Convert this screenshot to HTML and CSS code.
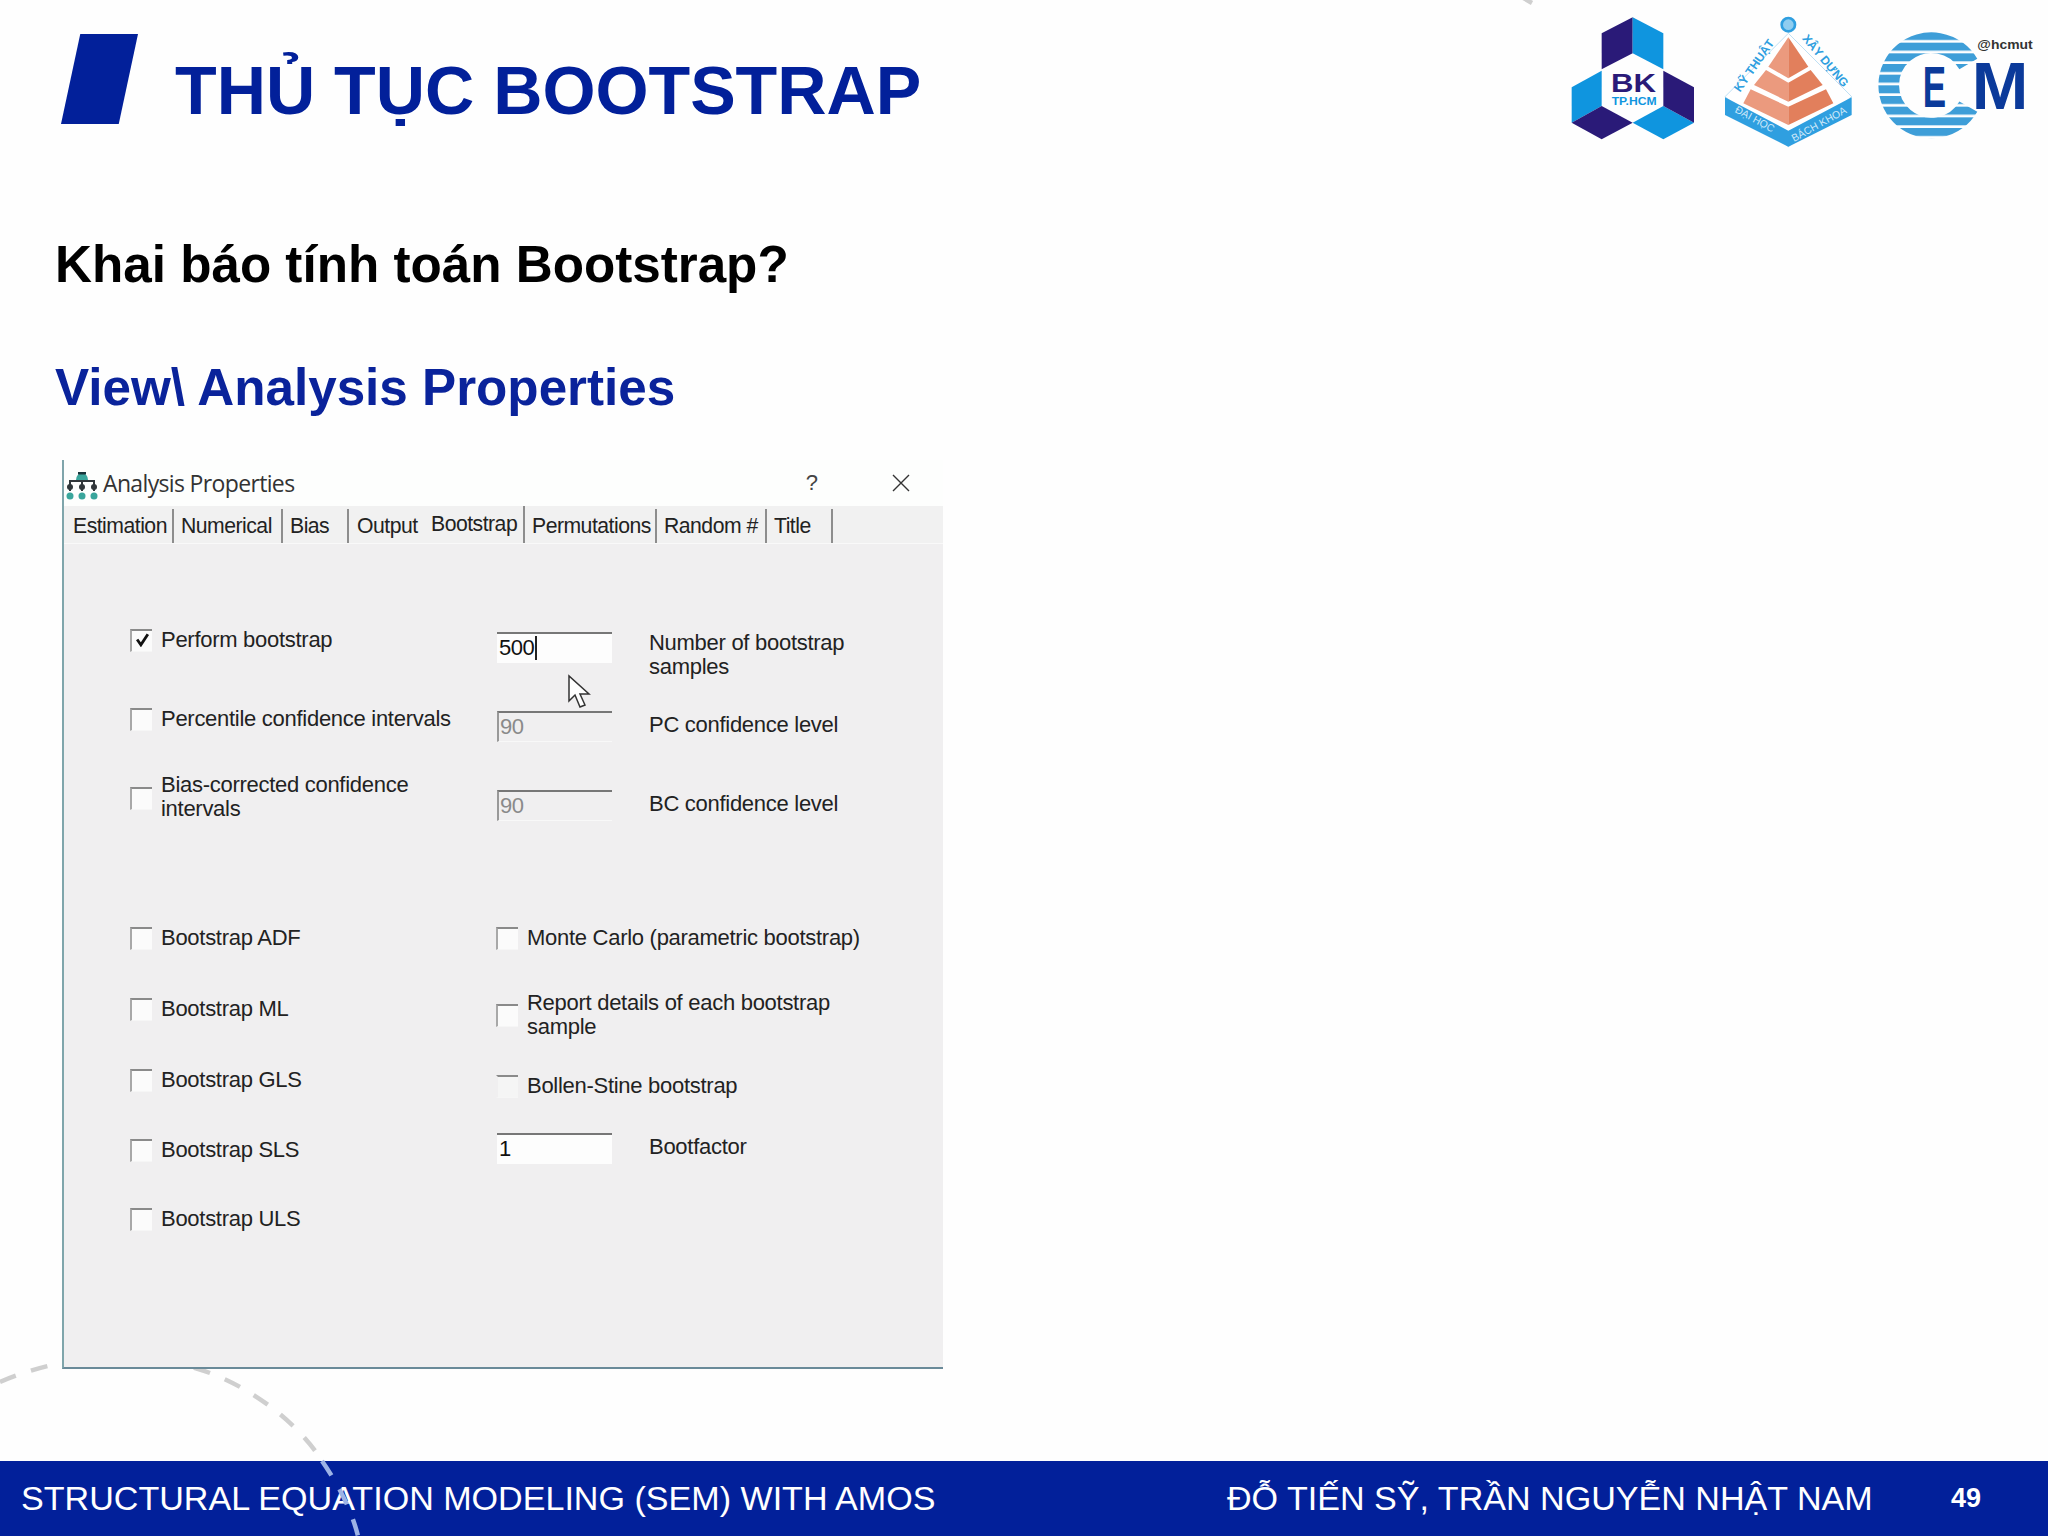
FILE: index.html
```html
<!DOCTYPE html>
<html lang="en">
<head>
  <meta charset="UTF-8" />
  <title>Thủ tục Bootstrap</title>
  <link rel="stylesheet" href="styles.css">
</head>
<body>
  <div class="slide">
    <svg class="arcs" width="2048" height="1536" viewBox="0 0 2048 1536">
      <path class="arc" d="M0 1382 C60 1356 130 1350 195 1368 C250 1384 300 1425 322 1461" />
      <path class="arc arc-on-bar" d="M322 1461 C340 1487 352 1512 358 1536" />
      <path class="arc" d="M1520 -4 L1532 3" />
    </svg>

    <div class="top">
      <div class="title">
        <div class="title-mark"></div>
        <h1>THỦ TỤC BOOTSTRAP</h1>
      </div>
      <svg class="logos" width="508" height="160" viewBox="0 0 1524 480">
        <!-- BK -->
        <polygon fill="#2a1a78" points="185,100 278,52 278,160 185,208" />
        <polygon fill="#0f95df" points="278,52 370,100 370,208 278,160" />
        <polygon fill="#0f95df" points="185,212 95,262 95,368 185,318" />
        <polygon fill="#2a1a78" points="95,368 185,318 278,368 185,418" />
        <polygon fill="#0f95df" points="278,368 370,318 462,368 370,418" />
        <polygon fill="#2a1a78" points="370,212 462,262 462,368 370,318" />
        <text class="bk" x="213" y="277" textLength="135" lengthAdjust="spacingAndGlyphs">BK</text>
        <text class="bk-sub" x="215" y="315" textLength="135" lengthAdjust="spacingAndGlyphs">TP.HCM</text>
        <!-- ky thuat xay dung -->
        <circle cx="745" cy="74" r="20" fill="#8fcdf0" stroke="#2f9fe0" stroke-width="8" />
        <polygon fill="#fff" stroke="#bfe0f4" stroke-width="3" points="745,100 935,290 745,440 555,290" />
        <polygon fill="#2f9fe0" points="555,292 745,392 935,292 935,345 745,440 555,345" />
        <polygon fill="#eb9a7e" points="745,112 745,235 685,200" />
        <polygon fill="#e27f5c" points="745,112 745,235 805,200" />
        <polygon fill="#eb9a7e" points="745,248 745,305 642,255 678,210" />
        <polygon fill="#e27f5c" points="745,248 745,305 848,255 812,210" />
        <polygon fill="#eb9a7e" points="745,320 745,375 610,310 632,268" />
        <polygon fill="#e27f5c" points="745,320 745,375 880,310 858,268" />
        <text class="ktxd" transform="translate(600,278) rotate(-55)">KỸ THUẬT</text>
        <text class="ktxd" transform="translate(785,116) rotate(50)">XÂY DỰNG</text>
        <text class="dhbk" transform="translate(583,335) rotate(29)">ĐẠI HỌC</text>
        <text class="dhbk" transform="translate(762,426) rotate(-29)">BÁCH KHOA</text>
        <!-- CEM -->
        <defs>
          <pattern id="stripes" width="10" height="32" patternUnits="userSpaceOnUse">
            <rect width="10" height="32" fill="#fff" />
            <rect width="10" height="24" fill="#3e9ed8" />
          </pattern>
        </defs>
        <path fill="none" stroke="url(#stripes)" stroke-width="62" d="M1285 192 A128 128 0 1 0 1285 320" />
        <text class="cem-e" x="1148" y="320" textLength="70" lengthAdjust="spacingAndGlyphs">E</text>
        <text class="cem-m" x="1295" y="328" textLength="170" lengthAdjust="spacingAndGlyphs">M</text>
        <text class="cem-tag" x="1312" y="148" textLength="166" lengthAdjust="spacingAndGlyphs">@hcmut</text>
      </svg>
    </div>

    <h2 class="question">Khai báo tính toán Bootstrap?</h2>
    <h2 class="path">View\ Analysis Properties</h2>

    <div class="dialog">
      <div class="dialog-title">
        <svg class="app-icon" width="34" height="36" viewBox="0 0 34 36">
          <path d="M17 12 V26 M17 16 H5 V26 M17 16 H29 V26" fill="none" stroke="#30363a" stroke-width="2" />
          <path d="M11 15 A6 7 0 1 1 23 15 Z" fill="#3aa69c" />
          <rect x="13" y="7" width="8" height="2.5" fill="#17343a" />
          <circle cx="5" cy="22" r="3" fill="#30363a" /><circle cx="17" cy="22" r="3" fill="#30363a" /><circle cx="29" cy="22" r="3" fill="#30363a" />
          <circle cx="5" cy="31" r="3.5" fill="#3aa69c" /><circle cx="17" cy="31" r="3.5" fill="#3aa69c" /><circle cx="29" cy="31" r="3.5" fill="#3aa69c" />
        </svg>
        <span class="dialog-name">Analysis Properties</span>
        <span class="help">?</span>
        <svg class="close" width="18" height="18" viewBox="0 0 18 18">
          <path d="M1 1 L17 17 M17 1 L1 17" stroke="#333" stroke-width="1.4" fill="none" />
        </svg>
      </div>

      <div class="tabs">
        <div class="tab tab-estimation">Estimation</div>
        <div class="tab tab-numerical">Numerical</div>
        <div class="tab tab-bias">Bias</div>
        <div class="tab tab-output">Output</div>
        <div class="tab tab-active">Bootstrap</div>
        <div class="tab tab-permutations">Permutations</div>
        <div class="tab tab-random">Random #</div>
        <div class="tab tab-title">Title</div>
      </div>

      <div class="panel">
        <div class="col col-left">
          <div class="row"><span class="check"><svg class="tick" width="15" height="15" viewBox="0 0 14 14"><path d="M2 7 L5.5 12 L12 2" fill="none" stroke="#111" stroke-width="2.6" /></svg></span><span class="label">Perform bootstrap</span></div>
          <div class="row"><span class="check"></span><span class="label">Percentile confidence intervals</span></div>
          <div class="row"><span class="check"></span><span class="label label-high">Bias-corrected confidence<br>intervals</span></div>
          <div class="row"><span class="check"></span><span class="label">Bootstrap ADF</span></div>
          <div class="row"><span class="check"></span><span class="label">Bootstrap ML</span></div>
          <div class="row"><span class="check"></span><span class="label">Bootstrap GLS</span></div>
          <div class="row"><span class="check"></span><span class="label">Bootstrap SLS</span></div>
          <div class="row"><span class="check"></span><span class="label">Bootstrap ULS</span></div>
        </div>

        <div class="col col-right">
          <div class="row row-field"><span class="field"><span>500</span><i class="caret"></i></span><span class="label label-low">Number of bootstrap<br>samples</span></div>
          <div class="row row-field"><span class="field field-off">90</span><span class="label">PC confidence level</span></div>
          <div class="row row-field"><span class="field field-off">90</span><span class="label">BC confidence level</span></div>
          <div class="row"><span class="check"></span><span class="label">Monte Carlo (parametric bootstrap)</span></div>
          <div class="row"><span class="check"></span><span class="label">Report details of each bootstrap<br>sample</span></div>
          <div class="row"><span class="check check-faint"></span><span class="label">Bollen-Stine bootstrap</span></div>
          <div class="row row-field"><span class="field">1</span><span class="label">Bootfactor</span></div>
        </div>

        <svg class="cursor" width="26" height="36" viewBox="0 0 26 36">
          <path d="M2 2 V27 L8 21 L13 33 L18 31 L13 20 L22 20 Z" fill="#fff" stroke="#333" stroke-width="1.5" />
        </svg>
      </div>
    </div>

    <div class="footer">
      <span class="footer-left">STRUCTURAL EQUATION MODELING (SEM) WITH AMOS</span>
      <span class="footer-right">ĐỖ TIẾN SỸ, TRẦN NGUYỄN NHẬT NAM</span>
      <span class="footer-page">49</span>
    </div>
  </div>
</body>
</html>
```

FILE: styles.css
```css
body {
  margin: 0;
  background: #fff;
  font-family: "Liberation Sans", Arial, sans-serif;
}

.slide {
  position: relative;
  width: 2048px;
  height: 1536px;
  display: flex;
  flex-direction: column;
  overflow: hidden;
  background: #fefefe;
}

.arcs {
  position: absolute;
  left: 0;
  top: 0;
  z-index: 2;
}

.arc {
  fill: none;
  stroke: #cfcfcf;
  stroke-width: 4.5;
  stroke-dasharray: 17 16;
}

.arc-on-bar {
  stroke: #9db3e6;
}

.top {
  display: flex;
  justify-content: space-between;
  height: 160px;
}

.title {
  display: flex;
  align-items: flex-start;
  padding: 34px 0 0 61px;
}

.title-mark {
  width: 77px;
  height: 90px;
  background: #02209a;
  clip-path: polygon(25% 0, 100% 0, 75% 100%, 0 100%);
}

.title h1 {
  margin: 20px 0 0 37px;
  font-size: 68.2px;
  line-height: 72px;
  font-weight: bold;
  color: #02209a;
}

.logos .bk {
  font: bold 78px "Liberation Sans", sans-serif;
  fill: #2a1a78;
}

.logos .bk-sub {
  font: bold 34px "Liberation Sans", sans-serif;
  fill: #0f95df;
}

.logos .ktxd {
  font: bold 36px "Liberation Sans", sans-serif;
  fill: #2f9fe0;
}

.logos .dhbk {
  font: 31px "Liberation Sans", sans-serif;
  fill: #cfe9f9;
}

.logos .cem-e {
  font: bold 172px "Liberation Sans", sans-serif;
  fill: #0b3a9a;
}

.logos .cem-m {
  font: bold 198px "Liberation Sans", sans-serif;
  fill: #0b3a9a;
}

.logos .cem-tag {
  font: bold 38px "Liberation Sans", sans-serif;
  fill: #333;
}

.question,
.path {
  margin: 0 0 0 55px;
  font-size: 51.2px;
  line-height: 60px;
  font-weight: bold;
}

.question {
  margin-top: 75px;
  color: #000;
}

.path {
  margin-top: 63px;
  color: #0a239b;
}

.dialog {
  position: relative;
  z-index: 3;
  box-sizing: border-box;
  width: 881px;
  height: 909px;
  margin: 42px 0 0 62px;
  display: flex;
  flex-direction: column;
  background: #f0eff0;
  border-left: 2px solid #7fa5ab;
  border-bottom: 2px solid #6a8a99;
}

.dialog-title {
  display: flex;
  align-items: center;
  height: 46px;
  background: #fdfefd;
}

.app-icon {
  margin-left: 1px;
}

.dialog-name {
  margin-left: 4px;
  font-family: "Open Sans", sans-serif;
  font-size: 23px;
  letter-spacing: -0.65px;
  color: #333;
}

.help {
  margin-left: auto;
  font-size: 22px;
  color: #444;
}

.close {
  margin: 0 33px 0 74px;
}

.tabs {
  display: flex;
  height: 37px;
  border-bottom: 1px solid #f9f9f9;
  background: #f1f1f1;
  font-size: 21.2px;
  letter-spacing: -0.5px;
  color: #222;
}

.tab {
  box-sizing: border-box;
  height: 34px;
  margin-top: 3px;
  padding: 5px 0 0 7px;
  border-right: 2px solid #8d8d8d;
}

.tab-estimation { width: 110px; padding-left: 9px; }
.tab-numerical { width: 109px; }
.tab-bias { width: 66px; }
.tab-output { width: 75px; border-right: none; padding-left: 8px; }
.tab-active { width: 101px; padding: 6px 0 0 7px; margin-top: 0; height: 37px; }
.tab-permutations { width: 132px; }
.tab-random { width: 110px; }
.tab-title { width: 66px; }

.panel {
  position: relative;
  flex: 1;
  display: grid;
  grid-template-columns: 366px 1fr;
  padding-left: 66px;
}

.col {
  display: grid;
  align-items: start;
  font-size: 22px;
  line-height: 24px;
  color: #222;
}

.col-left {
  padding-top: 72px;
  grid-template-rows: 79px 79px 140px 71px 71px 70px 69px 48px;
}

.col-right {
  padding-top: 79px;
  grid-template-rows: 79px 79px 133px 77px 71px 62px 48px;
}

.row {
  display: flex;
  align-items: center;
  gap: 9px;
  height: 48px;
}

.row-field {
  gap: 37px;
}

.row-field .label {
  margin-top: -3px;
}

.label {
  letter-spacing: -0.28px;
  white-space: nowrap;
}

.row-field .label-low {
  margin-top: 16px;
}

.label-high {
  margin-top: -3px;
}

.check {
  box-sizing: border-box;
  flex: none;
  display: flex;
  align-items: flex-start;
  justify-content: center;
  width: 22px;
  height: 23px;
  background: #fbfbfb;
  border-top: 2px solid #8a8a8a;
  border-left: 2px solid #a8a8a8;
  border-bottom: 1px solid #f6f6f6;
}

.check-faint {
  border-left-color: #f0eff0;
  background: #f5f5f5;
}

.tick {
  margin-top: 1px;
}

.field {
  box-sizing: border-box;
  flex: none;
  display: flex;
  align-items: center;
  width: 115px;
  height: 31px;
  margin-left: 1px;
  padding-left: 2px;
  background: #fdfdfd;
  border-top: 2px solid #777;
  letter-spacing: -0.5px;
  color: #111;
}

.field-off {
  background: #f0eff0;
  border-left: 2px solid #999;
  border-bottom: 1px solid #f8f8f8;
  padding-left: 1px;
  color: #8a8a8a;
}

.caret {
  width: 2px;
  height: 24px;
  margin-left: 1px;
  background: #222;
}

.cursor {
  position: absolute;
  left: 503px;
  top: 130px;
}

.footer {
  position: relative;
  margin-top: auto;
  display: flex;
  align-items: center;
  height: 75px;
  padding-left: 21px;
  background: #02209a;
  color: #fff;
  font-size: 34.1px;
}

.footer-right {
  position: absolute;
  left: 1227px;
}

.footer-page {
  position: absolute;
  left: 1951px;
  font-size: 27px;
  font-weight: bold;
}
```
